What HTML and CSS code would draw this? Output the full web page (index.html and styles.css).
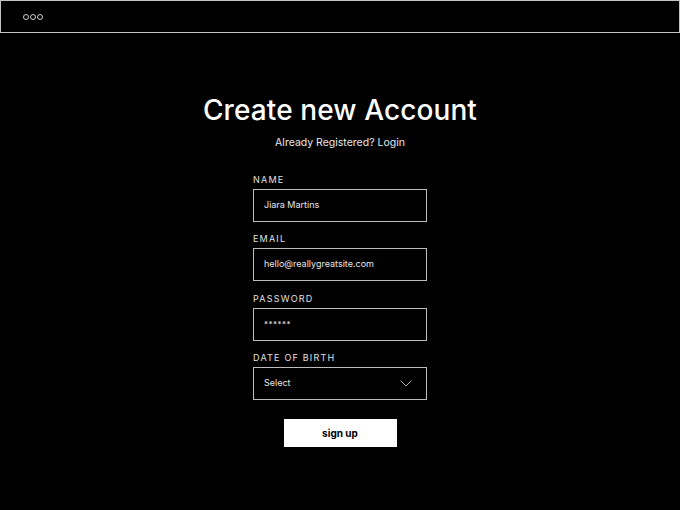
FILE: index.html
```html
<!DOCTYPE html>
<html>
<head>
<meta charset="utf-8">
<link rel="stylesheet" href="styles.css">
</head>
<body>
<header class="topbar">
  <span class="dot"></span><span class="dot"></span><span class="dot"></span>
</header>
<main class="main">
  <h1 class="title">Create new Account</h1>
  <p class="sub">Already Registered? Login</p>
  <form class="form">
    <div class="field">
      <label class="label">NAME</label>
      <div class="input">Jiara Martins</div>
    </div>
    <div class="field">
      <label class="label">EMAIL</label>
      <div class="input">hello@reallygreatsite.com</div>
    </div>
    <div class="field">
      <label class="label">PASSWORD</label>
      <div class="input pw">******</div>
    </div>
    <div class="field">
      <label class="label">DATE OF BIRTH</label>
      <div class="input select">
        <span>Select</span>
        <svg class="chev" width="12" height="7" viewBox="0 0 12 7"><path d="M0.5 0.5 L6 6 L11.5 0.5" fill="none" stroke="#a8a8a8" stroke-width="1"/></svg>
      </div>
    </div>
    <div class="btnrow"><div class="btn">sign up</div></div>
  </form>
</main>
</body>
</html>
```
FILE: styles.css
```css
html, body { margin: 0; padding: 0; background: #000; }
body { width: 680px; height: 510px; font-family: Inter, "Liberation Sans", sans-serif; color: #fff; overflow: hidden; }
.topbar { box-sizing: border-box; height: 33px; border: 1px solid #c4c4c4; display: flex; align-items: center; gap: 1px; padding-left: 22px; }
.dot { width: 4px; height: 4px; border: 1.3px solid #d0d0d0; border-radius: 50%; }
.main { display: flex; flex-direction: column; align-items: center; padding-top: 58px; }
.title { margin: 0; font-size: 28px; font-weight: 500; line-height: 38px; letter-spacing: 0.1px; }
.sub { margin: 7px 0 0; font-size: 10.5px; line-height: 14px; color: #e8e8e8; }
.form { margin-top: 25px; width: 174px; display: flex; flex-direction: column; }
.field { display: flex; flex-direction: column; margin-bottom: 12px; }
.field:nth-child(2) { margin-bottom: 13px; }
.label { font-size: 9px; letter-spacing: 1.2px; line-height: 10px; color: #e0e0e0; margin-bottom: 4px; }
.input { box-sizing: border-box; height: 33px; border: 1px solid #bdbdbd; display: flex; align-items: center; padding: 0 10px 2px; font-size: 9px; color: #e6e6e6; }
.pw { letter-spacing: 0.5px; font-size: 8px; }
.select { justify-content: space-between; padding-right: 14px; }
.chev { display: block; margin-top: 1px; }
.btnrow { display: flex; justify-content: center; margin-top: 7px; }
.btn { width: 113px; height: 28px; background: #fff; color: #000; font-size: 10px; font-weight: 700; display: flex; align-items: center; justify-content: center; }
```
